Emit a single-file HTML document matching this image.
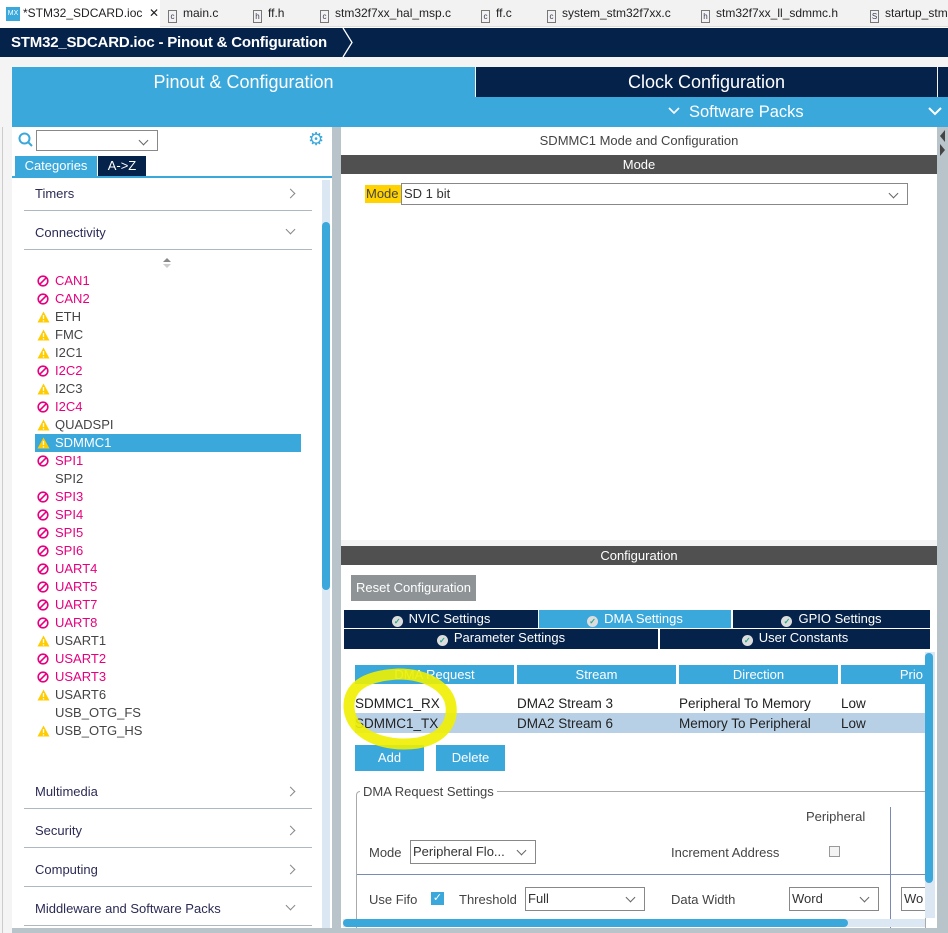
<!DOCTYPE html>
<html><head><meta charset="utf-8"><style>
*{box-sizing:border-box;margin:0;padding:0}
html,body{width:948px;height:933px;overflow:hidden}
body{background:#fff;font-family:"Liberation Sans",sans-serif;font-size:13px;position:relative;color:#333}
.a{position:absolute}
.tab{position:absolute;top:6px;font-size:12px;color:#222;white-space:nowrap}
.fi{display:inline-block;width:9px;height:13px;border:1px solid #777;font-size:8px;line-height:11px;text-align:center;margin-right:6px;vertical-align:-2px;color:#335}
.it{position:absolute;left:36px;height:18px;line-height:18px;font-size:13px;width:266px;padding-left:19px}
.e{color:#e6007e}.w{color:#444}
.cat{position:absolute;left:24px;width:288px;border-bottom:1px solid #aeb8c0;font-size:13px;color:#2b2b55;padding-left:11px;height:26px;line-height:18px}
.cr,.cd{position:absolute;right:18px;width:7px;height:7px;border-right:1.3px solid #888;border-bottom:1.3px solid #888}
.cr{top:5px;transform:rotate(-45deg)}
.cd{top:2px;transform:rotate(45deg)}
.hd{position:absolute;height:19px;line-height:19px;background:#3ba8dc;color:#fff;text-align:center;font-size:13px}
.btab{position:absolute;height:18px;line-height:18px;background:#05224a;color:#fff;text-align:center;font-size:13px}
.ck{display:inline-block;width:11px;height:11px;border-radius:50%;background:#ddd;color:#2a8;font-size:8px;line-height:11px;margin-right:6px;vertical-align:-1px;font-weight:bold}
.sel{position:absolute;border:1px solid #888;background:#fff;height:24px;font-size:13px;line-height:22px;padding-left:2px;color:#333}
.sel:after{content:"";position:absolute;right:10px;top:6px;width:6px;height:6px;border-right:1px solid #666;border-bottom:1px solid #666;transform:rotate(45deg)}
</style></head><body>
<div class="a" style="left:0;top:0;width:948px;height:27px;background:#f2f2f2;border-bottom:1px solid #ddd"></div>
<div class="a" style="left:0;top:0;width:160px;height:27px;background:#fff"></div>
<div class="a" style="left:6px;top:7px;width:14px;height:14px;background:#3ba8dc;color:#fff;font-size:7px;line-height:14px;text-align:center">MX</div>
<div class="tab" style="left:23px">*STM32_SDCARD.ioc&nbsp; ✕</div>
<div class="tab" style="left:168px"><span class="fi">c</span>main.c</div>
<div class="tab" style="left:253px"><span class="fi">h</span>ff.h</div>
<div class="tab" style="left:320px"><span class="fi">c</span>stm32f7xx_hal_msp.c</div>
<div class="tab" style="left:481px"><span class="fi">c</span>ff.c</div>
<div class="tab" style="left:547px"><span class="fi">c</span>system_stm32f7xx.c</div>
<div class="tab" style="left:701px"><span class="fi">h</span>stm32f7xx_ll_sdmmc.h</div>
<div class="tab" style="left:870px"><span class="fi">S</span>startup_stm</div>
<div class="a" style="left:0;top:28px;width:948px;height:29px;background:#05224a"></div>
<div class="a" style="left:11px;top:34px;color:#fff;font-weight:bold;font-size:15px;letter-spacing:-0.2px">STM32_SDCARD.ioc - Pinout &amp; Configuration</div>
<svg class="a" style="left:190px;top:28px" width="20" height="29"><path d="M3 0 L12 14.5 L3 29" stroke="#fff" stroke-width="1.3" fill="none" transform="translate(150,0)"/></svg>
<svg class="a" style="left:340px;top:28px" width="20" height="29"><path d="M3 0 L12 14.5 L3 29" stroke="#fff" stroke-width="1.3" fill="none"/></svg>
<div class="a" style="left:0;top:57px;width:948px;height:876px;background:#f4f4f4"></div>
<div class="a" style="left:2px;top:127px;width:1px;height:806px;background:#ccc"></div>
<div class="a" style="left:12px;top:67px;width:463px;height:30px;background:#3ba8dc;color:#fff;font-size:18px;text-align:center;line-height:30px">Pinout &amp; Configuration</div>
<div class="a" style="left:476px;top:67px;width:461px;height:30px;background:#05224a;color:#fff;font-size:18px;text-align:center;line-height:30px">Clock Configuration</div>
<div class="a" style="left:938px;top:67px;width:10px;height:30px;background:#05224a"></div>
<div class="a" style="left:12px;top:97px;width:936px;height:30px;background:#3ba8dc"></div>
<svg class="a" style="left:668px;top:106px" width="12" height="10"><path d="M1 2 L6 7 L11 2" stroke="#fff" stroke-width="1.6" fill="none"/></svg>
<div class="a" style="left:689px;top:103px;color:#fff;font-size:16.5px">Software Packs</div>
<svg class="a" style="left:928px;top:106px" width="14" height="10"><path d="M1 2 L7 8 L13 2" stroke="#fff" stroke-width="2" fill="none"/></svg>
<div class="a" style="left:332px;top:127px;width:9px;height:806px;background:#b9c3ca"></div>
<div class="a" style="left:937px;top:127px;width:11px;height:806px;background:#b9c3ca"></div>
<svg class="a" style="left:937px;top:128px" width="11" height="30"><path d="M8 2 L3 8 L8 14Z M3 16 L8 22 L3 28Z" fill="#444"/></svg>
<div class="a" style="left:12px;top:127px;width:320px;height:801px;background:#fff"></div>
<div class="a" style="left:12px;top:928px;width:929px;height:5px;background:#b9c3ca"></div>
<svg class="a" style="left:18px;top:132px" width="16" height="16"><circle cx="6.5" cy="6.5" r="5" stroke="#3ba8dc" stroke-width="2" fill="none"/><path d="M10 10 L14 14" stroke="#3ba8dc" stroke-width="2"/></svg>
<div class="sel" style="left:36px;top:130px;width:122px;height:21px"></div>
<div class="a" style="left:308px;top:130px;color:#3ba8dc;font-size:18px;line-height:18px">⚙</div>
<div class="a" style="left:15px;top:156px;width:82px;height:20px;background:#3ba8dc;color:#fff;font-size:13px;text-align:center;line-height:20px">Categories</div>
<div class="a" style="left:98px;top:156px;width:48px;height:20px;background:#05224a;color:#fff;font-size:13px;text-align:center;line-height:20px">A-&gt;Z</div>
<div class="a" style="left:12px;top:176px;width:320px;height:2px;background:#3ba8dc"></div>
<div class="a" style="left:322px;top:180px;width:8px;height:748px;background:#dbe8f4"></div>
<div class="a" style="left:322px;top:222px;width:8px;height:368px;background:#3ba8dc;border-radius:4px"></div>
<div class="cat" style="top:185px">Timers<span class="cr"></span></div>
<div class="cat" style="top:224px">Connectivity<span class="cd"></span></div>
<svg class="a" style="left:163px;top:258px" width="8" height="11"><path d="M4 0 L8 4 L0 4Z" fill="#888"/><path d="M4 10 L8 6 L0 6Z" fill="#ccc"/></svg>
<div class="a" style="left:35px;top:434px;width:266px;height:18px;background:#3ba8dc"></div>
<div id="list"></div>
<div class="cat" style="top:783px">Multimedia<span class="cr"></span></div>
<div class="cat" style="top:822px">Security<span class="cr"></span></div>
<div class="cat" style="top:861px">Computing<span class="cr"></span></div>
<div class="cat" style="top:900px">Middleware and Software Packs<span class="cd"></span></div>
<div class="a" style="left:341px;top:127px;width:596px;height:413px;background:#fff"></div>
<div class="a" style="left:341px;top:133px;width:596px;text-align:center;font-size:13px;color:#444">SDMMC1 Mode and Configuration</div>
<div class="a" style="left:341px;top:155px;width:596px;height:19px;background:#505050;color:#fff;text-align:center;line-height:19px;font-size:13px">Mode</div>
<div class="a" style="left:365px;top:185px;width:36px;height:18px;background:#ffd200;color:#444;font-size:13px;line-height:18px;padding-left:1px">Mode</div>
<div class="sel" style="left:401px;top:183px;width:507px;height:22px;line-height:20px">SD 1 bit</div>
<div class="a" style="left:341px;top:546px;width:596px;height:382px;background:#fff"></div>
<div class="a" style="left:341px;top:546px;width:596px;height:19px;background:#505050;color:#fff;text-align:center;line-height:19px;font-size:13px">Configuration</div>
<div class="a" style="left:351px;top:575px;width:125px;height:26px;background:#8e9396;color:#fff;text-align:center;line-height:26px;font-size:13px">Reset Configuration</div>
<div class="btab" style="left:344px;top:610px;width:194px"><span class="ck">✓</span>NVIC Settings</div>
<div class="btab" style="left:539px;top:610px;width:192px;background:#3ba8dc"><span class="ck">✓</span>DMA Settings</div>
<div class="btab" style="left:733px;top:610px;width:197px"><span class="ck">✓</span>GPIO Settings</div>
<div class="btab" style="left:344px;top:629px;width:314px;height:20px"><span class="ck">✓</span>Parameter Settings</div>
<div class="btab" style="left:660px;top:629px;width:270px;height:20px"><span class="ck">✓</span>User Constants</div>
<div class="hd" style="left:355px;top:665px;width:159px">DMA Request</div>
<div class="hd" style="left:517px;top:665px;width:159px">Stream</div>
<div class="hd" style="left:679px;top:665px;width:159px">Direction</div>
<div class="hd" style="left:841px;top:665px;width:84px;text-align:right;padding-right:2px">Prio</div>
<div class="a" style="left:355px;top:713px;width:570px;height:20px;background:#b8d0e6"></div>
<div class="a" style="left:355px;top:696px;font-size:13.5px;color:#222">SDMMC1_RX</div>
<div class="a" style="left:517px;top:696px;font-size:13.5px;color:#222">DMA2 Stream 3</div>
<div class="a" style="left:679px;top:696px;font-size:13.5px;color:#222">Peripheral To Memory</div>
<div class="a" style="left:841px;top:696px;font-size:13.5px;color:#222">Low</div>
<div class="a" style="left:355px;top:716px;font-size:13.5px;color:#222">SDMMC1_TX</div>
<div class="a" style="left:517px;top:716px;font-size:13.5px;color:#222">DMA2 Stream 6</div>
<div class="a" style="left:679px;top:716px;font-size:13.5px;color:#222">Memory To Peripheral</div>
<div class="a" style="left:841px;top:716px;font-size:13.5px;color:#222">Low</div>
<div class="a" style="left:355px;top:745px;width:69px;height:26px;background:#3ba8dc;color:#fff;text-align:center;line-height:26px">Add</div>
<div class="a" style="left:436px;top:745px;width:69px;height:26px;background:#3ba8dc;color:#fff;text-align:center;line-height:26px">Delete</div>
<svg class="a" style="left:343px;top:668px" width="120" height="86"><path d="M55 6 C20 8 5 20 6 40 C8 66 40 80 75 75 C100 70 110 55 108 38 C106 20 85 6 55 6Z" stroke="#f0f000" stroke-width="11" fill="none" opacity=".9"/></svg>
<div class="a" style="left:356px;top:791px;width:570px;height:137px;border:1px solid #aaa;border-bottom:none;border-radius:4px 0 0 0"></div>
<div class="a" style="left:360px;top:784px;background:#fff;padding:0 3px;font-size:13px;color:#444">DMA Request Settings</div>
<div class="a" style="left:806px;top:809px;font-size:13px;color:#444">Peripheral</div>
<div class="a" style="left:890px;top:807px;width:1px;height:121px;background:#7a8ab0"></div>
<div class="a" style="left:357px;top:874px;width:568px;height:1px;background:#7a8ab0"></div>
<div class="a" style="left:369px;top:845px;font-size:13px;color:#444">Mode</div>
<div class="sel" style="left:410px;top:840px;width:126px">Peripheral Flo...</div>
<div class="a" style="left:671px;top:845px;font-size:13px;color:#444">Increment Address</div>
<div class="a" style="left:829px;top:846px;width:11px;height:11px;border:1px solid #999;background:#f4f4f4"></div>
<div class="a" style="left:369px;top:892px;font-size:13px;color:#444">Use Fifo</div>
<div class="a" style="left:431px;top:892px;width:13px;height:13px;background:#3ba8dc;color:#fff;font-size:11px;line-height:13px;text-align:center">✓</div>
<div class="a" style="left:459px;top:892px;font-size:13px;color:#444">Threshold</div>
<div class="sel" style="left:525px;top:887px;width:120px">Full</div>
<div class="a" style="left:671px;top:892px;font-size:13px;color:#444">Data Width</div>
<div class="sel" style="left:789px;top:887px;width:90px">Word</div>
<div class="a" style="left:901px;top:887px;width:30px;height:24px;border:1px solid #888;font-size:13px;line-height:22px;padding-left:2px;overflow:hidden">Wo</div>
<div class="a" style="left:925px;top:652px;width:10px;height:266px;background:#dbe8f4"></div>
<div class="a" style="left:925px;top:653px;width:8px;height:230px;background:#3ba8dc;border-radius:4px"></div>
<div class="a" style="left:343px;top:919px;width:582px;height:8px;background:#dbe8f4"></div>
<div class="a" style="left:343px;top:919px;width:505px;height:8px;background:#3ba8dc;border-radius:4px"></div>
<script>
var items=[["CAN1","e"],["CAN2","e"],["ETH","w"],["FMC","w"],["I2C1","w"],["I2C2","e"],["I2C3","w"],["I2C4","e"],["QUADSPI","w"],["SDMMC1","s"],["SPI1","e"],["SPI2","n"],["SPI3","e"],["SPI4","e"],["SPI5","e"],["SPI6","e"],["UART4","e"],["UART5","e"],["UART7","e"],["UART8","e"],["USART1","w"],["USART2","e"],["USART3","e"],["USART6","w"],["USB_OTG_FS","n"],["USB_OTG_HS","w"]];
var h="";
items.forEach(function(it,i){var t=272+18*i;var ic="";
if(it[1]=="e")ic='<svg style="position:absolute;left:1px;top:3px" width="12" height="12"><circle cx="6" cy="6" r="4.8" stroke="#e6007e" stroke-width="1.6" fill="none"/><path d="M2.8 9.2 L9.2 2.8" stroke="#e6007e" stroke-width="1.6"/></svg>';
if(it[1]=="w"||it[1]=="s")ic='<svg style="position:absolute;left:1px;top:3px" width="13" height="12"><path d="M6.5 0.5 L12.5 11.5 L0.5 11.5Z" fill="#ffcc00"/><path d="M6.5 4 L6.5 8 M6.5 9.3 L6.5 10.5" stroke="#fff" stroke-width="1.3"/></svg>';
var c=it[1]=="e"?"e":"w";var st=it[1]=="s"?"color:#fff;":"";
h+='<div class="it '+c+'" style="top:'+t+'px;'+st+'">'+ic+it[0]+'</div>';});
document.getElementById("list").innerHTML=h;
</script>
</body></html>
